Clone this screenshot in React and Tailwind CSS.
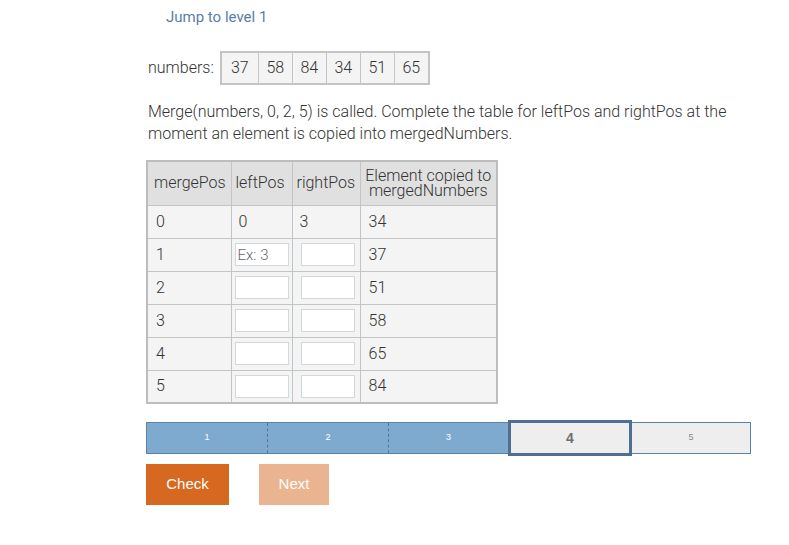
import { useState } from 'react'

const numbers = [37, 58, 84, 34, 51, 65]

const rows = [
  { m: 0, l: '0', r: '3', el: 34, fixed: true },
  { m: 1, el: 37, placeholder: 'Ex: 3' },
  { m: 2, el: 51 },
  { m: 3, el: 58 },
  { m: 4, el: 65 },
  { m: 5, el: 84 },
]

function Cell({ children, className = '' }) {
  return <td className={'border border-[#c4c4c4] h-[33px] ' + className}>{children}</td>
}

function Box({ placeholder }) {
  const [v, setV] = useState('')
  return (
    <input
      value={v}
      onChange={e => setV(e.target.value)}
      placeholder={placeholder}
      className="w-[54px] h-[23px] border border-[#cfd8de] bg-white px-[2px] text-[15px] text-[#333] placeholder:text-[#666] outline-none block"
    />
  )
}

export default function App() {
  const segs = [
    { n: 1, cls: 'w-[120px] bg-[#7faacf] text-white text-[9px]' },
    { n: 2, cls: 'w-[121px] bg-[#7faacf] text-white text-[9px] border-l border-dashed border-[#4f759b]' },
    { n: 3, cls: 'w-[120px] bg-[#7faacf] text-white text-[9px] border-l border-dashed border-[#4f759b]' },
    { n: 4, cls: 'w-[124px] bg-[#eeeeee] border-[3px] border-[#4f6f92] -my-[3px] text-[14px] font-bold text-[#6e6e6e] z-10' },
    { n: 5, cls: 'w-[118px] bg-[#eeeeee] text-[9px] text-[#888]' },
  ]
  return (
    <div className="w-[789px] h-[545px] bg-white text-[#333] font-light" style={{ fontFamily: 'Roboto, "Noto Sans", sans-serif' }}>
      <div className="pl-[146px]">
        <div className="pt-[6px] pl-[20px] text-[15px] font-normal text-[#5a7ea5] h-[21px]">Jump to level 1</div>

        <div className="flex items-center mt-[30px] pl-[2px]">
          <span className="text-[16px] mr-[6px]">numbers:</span>
          <div className="flex border-2 border-[#c4c4c4] bg-[#f4f4f4]">
            {numbers.map((n, i) => (
              <div key={i} className={'h-[30px] flex items-center justify-center text-[16px] ' + (i > 0 ? 'border-l border-[#c4c4c4] w-[34px]' : 'w-[36px]')}>{n}</div>
            ))}
          </div>
        </div>

        <p className="mt-[16px] pl-[2px] w-[600px] text-[16px] leading-[22px]">
          Merge(numbers, 0, 2, 5) is called. Complete the table for leftPos and rightPos at the moment an element is copied into mergedNumbers.
        </p>

        <table className="mt-[15px] table-fixed w-[352px] border-collapse border-2 border-[#bdbdbd] text-[16px] bg-[#f4f4f4]">
          <thead>
            <tr className="bg-[#e0e0e0] h-[44px]">
              <th className="border border-[#c4c4c4] font-light w-[84px] px-[6px] text-left">mergePos</th>
              <th className="border border-[#c4c4c4] font-light w-[61px] px-[4px] text-left">leftPos</th>
              <th className="border border-[#c4c4c4] font-light w-[68px] px-[4px] text-left">rightPos</th>
              <th className="border border-[#c4c4c4] font-light px-[2px] pb-[1px] leading-[15px] text-center">Element copied to<br />mergedNumbers</th>
            </tr>
          </thead>
          <tbody>
            {rows.map(r => (
              <tr key={r.m}>
                <Cell className="px-[8px]">{r.m}</Cell>
                <Cell className="px-[3px]">{r.fixed ? <span className="pl-[4px]">{r.l}</span> : <Box placeholder={r.placeholder} />}</Cell>
                <Cell className="px-[8px]">{r.fixed ? <span className="-ml-[1px]">{r.r}</span> : <Box />}</Cell>
                <Cell className="px-[8px]">{r.el}</Cell>
              </tr>
            ))}
          </tbody>
        </table>

        <div className="mt-[18px] w-[605px] h-[32px] flex border border-[#5a82a8]" style={{ fontFamily: '"Liberation Sans", Arial, sans-serif' }}>
          {segs.map(s => (
            <div key={s.n} className={'shrink-0 flex items-center justify-center ' + s.cls}>
              {s.n}
            </div>
          ))}
        </div>

        <div className="flex gap-[30px] mt-[10px]" style={{ fontFamily: '"Liberation Sans", Arial, sans-serif' }}>
          <button className="w-[83px] h-[41px] bg-[#d66820] text-white text-[15px] font-normal">Check</button>
          <button className="w-[70px] h-[41px] bg-[#e9b48f] text-white text-[15px] font-normal">Next</button>
        </div>
      </div>
    </div>
  )
}
